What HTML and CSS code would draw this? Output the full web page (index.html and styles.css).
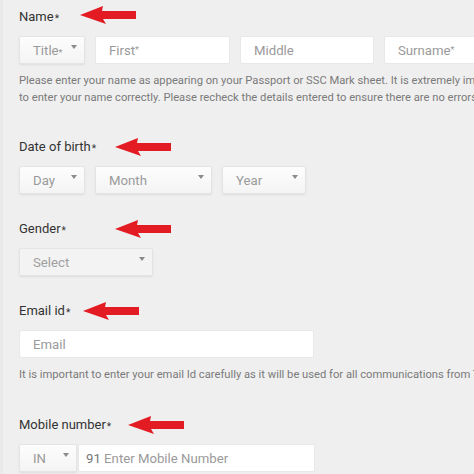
FILE: index.html
```html
<!DOCTYPE html>
<html>
<head>
<meta charset="utf-8">
<link rel="stylesheet" href="styles.css">
</head>
<body>
<div class="page">
  <form class="form">
    <section class="field field-name">
      <div class="label">Name<span class="star">*</span>
        <svg class="arrow arrow-name" viewBox="0 0 56 18"><path d="M0 9 L23 0 L22 5 L56 5 L56 13 L23 13 L26 18 Z"/></svg>
      </div>
      <div class="row">
        <div class="select w-title"><span>Title<span class="pstar">*</span></span><i class="caret"></i></div>
        <div class="input w-first">First<span class="pstar">*</span></div>
        <div class="input w-middle">Middle</div>
        <div class="input w-surname">Surname<span class="pstar">*</span></div>
      </div>
      <p class="help help-name">Please enter your name as appearing on your Passport or SSC Mark sheet. It is extremely important<br>to enter your name correctly. Please recheck the details entered to ensure there are no errors in it.</p>
    </section>

    <section class="field field-dob">
      <div class="label">Date of birth<span class="star">*</span>
        <svg class="arrow arrow-dob" viewBox="0 0 56 18"><path d="M0 9 L23 0 L22 5 L56 5 L56 13 L23 13 L26 18 Z"/></svg>
      </div>
      <div class="row">
        <div class="select w-day"><span>Day</span><i class="caret"></i></div>
        <div class="select w-month"><span>Month</span><i class="caret"></i></div>
        <div class="select w-year"><span>Year</span><i class="caret"></i></div>
      </div>
    </section>

    <section class="field field-gender">
      <div class="label">Gender<span class="star">*</span>
        <svg class="arrow arrow-gender" viewBox="0 0 56 18"><path d="M0 9 L23 0 L22 5 L56 5 L56 13 L23 13 L26 18 Z"/></svg>
      </div>
      <div class="row">
        <div class="select select-disabled w-gender"><span>Select</span><i class="caret"></i></div>
      </div>
    </section>

    <section class="field field-email">
      <div class="label">Email id<span class="star">*</span>
        <svg class="arrow arrow-email" viewBox="0 0 56 18"><path d="M0 9 L23 0 L22 5 L56 5 L56 13 L23 13 L26 18 Z"/></svg>
      </div>
      <div class="row">
        <div class="input w-email">Email</div>
      </div>
      <p class="help help-email">It is important to enter your email Id carefully as it will be used for all communications from TCS.</p>
    </section>

    <section class="field field-mobile">
      <div class="label">Mobile number<span class="star">*</span>
        <svg class="arrow arrow-mobile" viewBox="0 0 56 18"><path d="M0 9 L23 0 L22 5 L56 5 L56 13 L23 13 L26 18 Z"/></svg>
      </div>
      <div class="row row-tight">
        <div class="select w-cc"><span>IN</span><i class="caret"></i></div>
        <div class="input input-tight w-mobile"><span class="code">91</span>&nbsp;Enter Mobile Number</div>
      </div>
    </section>
  </form>
</div>
</body>
</html>
```

FILE: styles.css
```css
html, body {
  margin: 0;
  padding: 0;
  background: #efefef;
  overflow: hidden;
}

.page {
  width: 474px;
  height: 474px;
  overflow: hidden;
  border-left: 3px solid #e9e9e9;
  box-sizing: border-box;
}

.form {
  width: 700px;
  padding: 7px 0 0 16px;
  font-family: Roboto, "Liberation Sans", Arial, sans-serif;
}

.field {
  display: flex;
  flex-direction: column;
}

.label {
  position: relative;
  font-size: 13px;
  line-height: 20px;
  color: #333;
  height: 20px;
}

.star {
  font-size: 10px;
  vertical-align: -1px;
  margin-left: 1px;
}

.arrow {
  position: absolute;
  top: 1px;
  width: 56px;
  height: 18px;
  fill: #e31b23;
}

.arrow-name { left: 61px; top: -1px; }
.arrow-dob { left: 96px; }
.arrow-gender { left: 96px; }
.arrow-email { left: 64px; }
.arrow-mobile { left: 109px; }

.row {
  display: flex;
  gap: 10px;
  margin-top: 9px;
}

.row-tight { gap: 1px; }

.select, .input {
  box-sizing: border-box;
  height: 28px;
  display: flex;
  align-items: center;
  font-size: 13.2px;
  color: #9a9a9a;
  border-radius: 2px;
}

.select {
  position: relative;
  padding-left: 13px;
  background: linear-gradient(#fdfdfd, #f4f4f4);
  border: 1px solid #e4e4e4;
  box-shadow: 0 1px 2px rgba(0, 0, 0, 0.08);
}

.select-disabled {
  background: #f3f3f3;
  color: #a0a0a0;
}

.caret {
  position: absolute;
  right: 7px;
  top: 8px;
  width: 0;
  height: 0;
  border-left: 3px solid transparent;
  border-right: 3px solid transparent;
  border-top: 4px solid #8a8a8a;
}

.input {
  padding-left: 13px;
  background: #fff;
  border: 1px solid #e8e8e8;
}

.input-tight { padding-left: 7px; }

.pstar {
  font-size: 9px;
  vertical-align: -1px;
}

.code { color: #777; }

.w-title { width: 66px; }
.w-first { width: 135px; }
.w-middle { width: 134px; }
.w-surname { width: 134px; }
.w-day { width: 66px; }
.w-month { width: 117px; }
.w-year { width: 84px; }
.w-gender { width: 134px; }
.w-email { width: 295px; }
.w-cc { width: 58px; }
.w-mobile { width: 237px; }

.help {
  margin: 8px 0 0 0;
  font-size: 11.2px;
  line-height: 17px;
  color: #7a7a7a;
  white-space: nowrap;
}

.field-dob { margin-top: 31px; }
.field-gender { margin-top: 25px; }
.field-email { margin-top: 25px; }
.field-mobile { margin-top: 32px; }
```
